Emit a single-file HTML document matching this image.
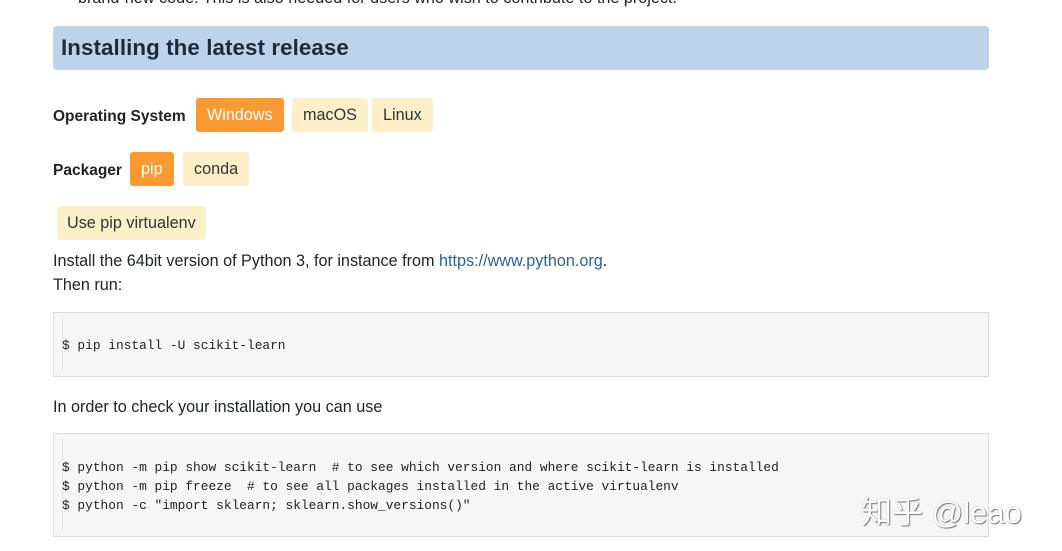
<!DOCTYPE html>
<html><head><meta charset="utf-8"><style>
body{margin:0;width:1062px;height:551px;overflow:hidden;background:#fff;font-family:"Liberation Sans","Noto Sans CJK SC",sans-serif;color:#212529;font-size:16.2px;position:relative}
.a{position:absolute}
.h{left:53px;top:26px;width:936px;height:44px;background:#bdd3ea;border-radius:4px}
.h span{position:absolute;left:8px;top:9px;font-size:22.3px;font-weight:bold;color:#1b2a3a;letter-spacing:0.1px}
.b{position:absolute;height:34px;line-height:35px;padding:0 11px;background:#fdf0c9;border-radius:3px;color:#333}
.on{background:#fb9a33;color:#fff}
.lab{font-weight:bold;color:#222;font-size:15.5px}
pre{margin:0;position:absolute;left:53px;width:934px;background:#f6f6f6;border:1px solid #ddd;font-family:"Liberation Mono",monospace;font-size:12.85px;line-height:19px;color:#222}
pre:before{content:"";position:absolute;left:8px;top:5px;bottom:5px;border-left:1px solid #e4e4e4}
pre div{position:absolute;left:8px}
</style></head><body>
<div class="a" style="left:78px;top:-11px">brand-new code. This is also needed for users who wish to contribute to the project.</div>
<div class="a h"><span>Installing the latest release</span></div>
<div class="a lab" style="left:53px;top:108px">Operating System</div>
<div class="b on" style="left:196px;top:98px">Windows</div>
<div class="b" style="left:292px;top:98px">macOS</div>
<div class="b" style="left:372px;top:98px">Linux</div>
<div class="a lab" style="left:53px;top:162px">Packager</div>
<div class="b on" style="left:130px;top:152px">pip</div>
<div class="b" style="left:183px;top:152px">conda</div>
<div class="b" style="left:57px;top:206px;padding:0 10px">Use pip virtualenv</div>
<div class="a" style="left:53px;top:252px">Install the 64bit version of Python 3, for instance from <span style="color:#2a6496">https://www.python.org</span>.</div>
<div class="a" style="left:53px;top:276px">Then run:</div>
<pre style="top:312px;height:63px"><div style="top:23px">$ pip install -U scikit-learn</div></pre>
<div class="a" style="left:53px;top:398px">In order to check your installation you can use</div>
<pre style="top:433px;height:102px"><div style="top:24px">$ python -m pip show scikit-learn  # to see which version and where scikit-learn is installed
$ python -m pip freeze  # to see all packages installed in the active virtualenv
$ python -c "import sklearn; sklearn.show_versions()"</div></pre>
<div class="a" style="left:861px;top:487px;font-size:31px;color:#fff;text-shadow:1px 1px 1px #777,0 0 1px #999">知乎 @leao</div>
</body></html>
